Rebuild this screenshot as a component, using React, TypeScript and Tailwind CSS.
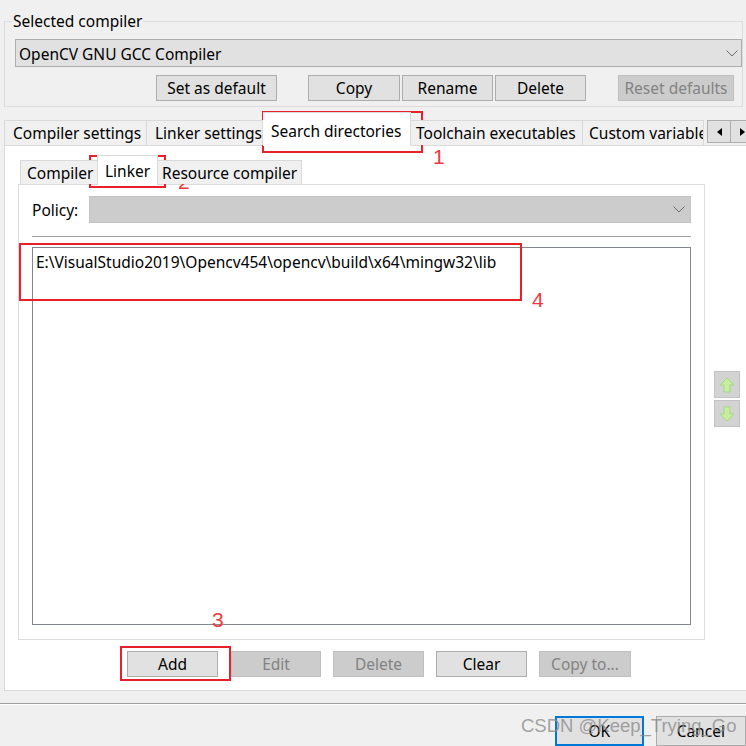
import type { ReactNode } from "react";

const FONT = { fontFamily: '"Noto Sans", "Open Sans", sans-serif' };

function Btn({ w, children, disabled, ml = 0 }: { w: number; children: ReactNode; disabled?: boolean; ml?: number }) {
  return (
    <div
      style={{ width: w, marginLeft: ml }}
      className={
        "h-[26px] shrink-0 flex items-center justify-center border text-[15.5px] leading-[20px] " +
        (disabled ? "bg-[#cccccc] border-[#bfbfbf] text-[#838383]" : "bg-[#e1e1e1] border-[#adadad] text-black")
      }
    >
      {children}
    </div>
  );
}

function Chevron() {
  return (
    <svg width="12" height="7" viewBox="0 0 12 7" className="shrink-0">
      <path d="M0.5 0.5 L6 6 L11.5 0.5" fill="none" stroke="#6d6d6d" strokeWidth="1" />
    </svg>
  );
}

function Tab({ w, children, pl = 8, first }: { w: number; children: ReactNode; pl?: number; first?: boolean }) {
  return (
    <div
      style={{ width: w, paddingLeft: pl }}
      className={
        "h-[25px] shrink-0 flex items-center border-t border-r border-[#d9d9d9] bg-[#f0f0f0] text-[15.5px] leading-[20px] whitespace-nowrap overflow-hidden " +
        (first ? "border-l" : "")
      }
    >
      {children}
    </div>
  );
}

function Arrow({ down }: { down?: boolean }) {
  return (
    <div className="w-[26px] h-[27px] bg-[#d3d3d3] border border-[#c2c2c2] flex items-center justify-center">
      <svg width="16" height="16" viewBox="0 0 16 16" style={{ transform: down ? "rotate(180deg)" : undefined }}>
        <path d="M8 1 L15 8 L11 8 L11 15 L5 15 L5 8 L1 8 Z" fill="#c6eea0" stroke="#a6d87e" strokeWidth="1" strokeLinejoin="round" />
      </svg>
    </div>
  );
}

function RedBox({ x, y, w, h }: { x: number; y: number; w: number; h: number }) {
  return <div style={{ left: x, top: y, width: w, height: h }} className="absolute border-2 border-[#e8202a]" />;
}

function Num({ x, y, n }: { x: number; y: number; n: string }) {
  return (
    <div style={{ left: x, top: y, fontFamily: '"Liberation Sans", sans-serif' }} className="absolute text-[21px] leading-none text-[#ee3a3f]">
      {n}
    </div>
  );
}

export default function App() {
  return (
    <div style={FONT} className="relative w-[746px] h-[746px] overflow-hidden bg-[#f0f0f0] text-black text-[15.5px] leading-[20px]">
      {/* Selected compiler group */}
      <div className="relative mt-[21px] ml-[4px] w-[739px] h-[86px] border border-[#dcdcdc]">
        <div className="absolute -top-[11px] left-[7px] px-[1px] bg-[#f0f0f0]">Selected compiler</div>
        <div className="mt-[17px] ml-[10px] w-[727px] h-[28px] border border-[#adadad] bg-[#e1e1e1] flex items-center pl-[3px] pr-[3px] pt-px justify-between">
          <span>OpenCV GNU GCC Compiler</span>
          <Chevron />
        </div>
        <div className="mt-[8px] flex">
          <Btn w={121} ml={151}>Set as default</Btn>
          <Btn w={92} ml={31}>Copy</Btn>
          <Btn w={91} ml={2}>Rename</Btn>
          <Btn w={91} ml={2}>Delete</Btn>
          <Btn w={116} ml={32} disabled>Reset defaults</Btn>
        </div>
      </div>

      {/* Main tabs */}
      <div className="relative z-10 mt-[5px] ml-[4px] h-[33px]">
        <div className="flex items-end h-[33px]">
          <Tab w={143} first>Compiler settings</Tab>
          <Tab w={116}>Linker settings</Tab>
          <div className="h-[34px] w-[148px] shrink-0 -mb-px bg-white border-t border-r border-[#d9d9d9] flex items-start pt-[8px] pl-[8px] whitespace-nowrap">
            Search directories
          </div>
          <Tab w={172} pl={5}>Toolchain executables</Tab>
          <Tab w={121} pl={6}>Custom variable</Tab>
        </div>
        <div className="absolute left-[703px] top-[8px] flex">
          <div className="w-[24px] h-[23px] bg-[#e1e1e1] border border-[#adadad] flex items-center justify-center">
            <svg width="5" height="8" viewBox="0 0 5 8"><path d="M5 0 L0 4 L5 8 Z" fill="#000" /></svg>
          </div>
          <div className="w-[24px] h-[23px] -ml-px bg-[#e1e1e1] border border-[#adadad] flex items-center justify-center">
            <svg width="5" height="8" viewBox="0 0 5 8"><path d="M0 0 L5 4 L0 8 Z" fill="#000" /></svg>
          </div>
        </div>
      </div>

      {/* Tab panel */}
      <div className="ml-[4px] w-[750px] h-[546px] bg-white border border-[#d9d9d9]">
        <div className="mt-[9px] ml-[15px] h-[29px] flex items-end relative z-10">
          <div className="w-[78px] h-[24px] bg-[#f0f0f0] border border-b-0 border-[#d9d9d9] pl-[6px] flex items-center whitespace-nowrap overflow-hidden">Compiler</div>
          <div className="w-[61px] h-[30px] -ml-px -mb-px bg-white border border-b-0 border-[#d9d9d9] pl-[7px] pt-[5px] whitespace-nowrap">Linker</div>
          <div className="w-[145px] h-[24px] -ml-px bg-[#f0f0f0] border border-b-0 border-[#d9d9d9] pl-[4px] flex items-center whitespace-nowrap overflow-hidden">Resource compiler</div>
        </div>
        <div className="flex">
          <div className="ml-[13px] w-[687px] h-[456px] border border-[#dcdcdc] bg-white pl-[13px]">
            <div className="mt-[11px] flex items-center h-[27px]">
              <span className="w-[57px]">Policy:</span>
              <div className="w-[602px] h-[27px] bg-[#cccccc] border border-[#c4c4c4] flex items-center justify-end pr-[5px]">
                <Chevron />
              </div>
            </div>
            <div className="mt-[13px] w-[659px] h-px bg-[#a0a0a0]" />
            <div className="mt-[10px] w-[659px] h-[378px] border border-[#82878f] bg-white pl-[3px] pt-[4px]">
              E:\VisualStudio2019\Opencv454\opencv\build\x64\mingw32\lib
            </div>
          </div>
          <div className="ml-[9px] mt-[187px] flex flex-col gap-[2px]">
            <Arrow />
            <Arrow down />
          </div>
        </div>
        <div className="mt-[11px] flex">
          <Btn w={91} ml={122}>Add</Btn>
          <Btn w={90} ml={13} disabled>Edit</Btn>
          <Btn w={91} ml={12} disabled>Delete</Btn>
          <Btn w={91} ml={12}>Clear</Btn>
          <Btn w={92} ml={12} disabled>Copy to...</Btn>
        </div>
      </div>

      {/* bottom separator */}
      <div className="mt-[12px] h-px bg-[#a0a0a0]" />
      <div className="h-px bg-white" />
      <div className="mt-[11px] flex">
        <div className="ml-[555px] w-[90px] h-[30px] bg-[#e1e1e1] border-2 border-[#0078d7] flex items-center justify-center">OK</div>
        <div className="ml-[12px] w-[92px] h-[30px] bg-[#e1e1e1] border border-[#adadad] flex items-center justify-center">Cancel</div>
      </div>

      {/* watermark */}
      <div
        style={{ left: 521, top: 715, fontFamily: '"Liberation Sans", sans-serif' }}
        className="absolute text-[18.5px] leading-[22px] text-[#8c8c8c]/80 whitespace-nowrap"
      >
        CSDN @Keep_Trying_Go
      </div>

      {/* annotations */}
      <RedBox x={262} y={111} w={161} h={42} />
      <Num x={433} y={146} n="1" />
      <RedBox x={89} y={155} w={77} h={33} />
      <Num x={178} y={171} n="2" />
      <RedBox x={19} y={243} w={503} h={58} />
      <Num x={532} y={289} n="4" />
      <RedBox x={120} y={646} w={111} h={35} />
      <Num x={212} y={609} n="3" />
    </div>
  );
}
